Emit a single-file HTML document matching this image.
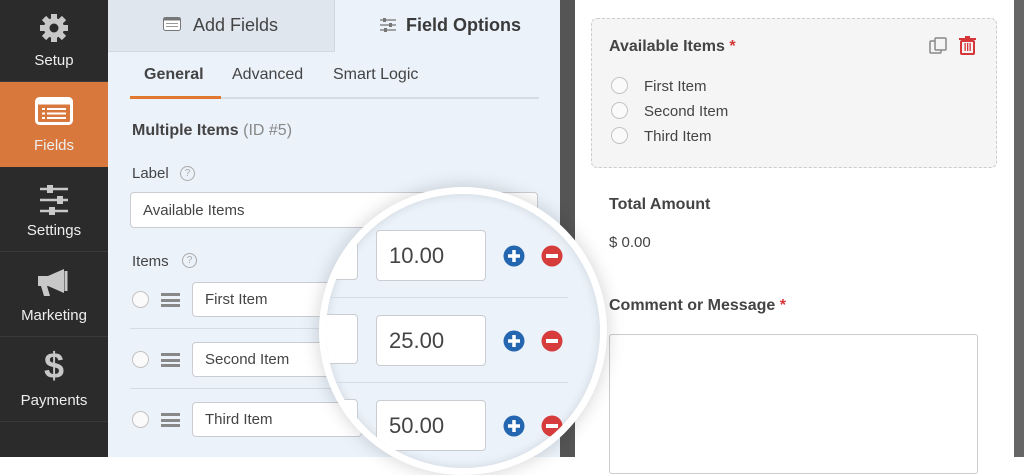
<!DOCTYPE html>
<html><head><style>
*{box-sizing:border-box;margin:0;padding:0}
body{width:1024px;height:457px;overflow:hidden;position:relative;font-family:"Liberation Sans",sans-serif;background:#fff;color:#444}
.abs{position:absolute}
#side{left:0;top:0;width:108px;height:457px;background:#2b2b2b}
.si{position:absolute;left:0;width:108px;height:85px;border-bottom:1px solid #3a3a3a;color:#eee;font-size:15px;text-align:center}
.si span{position:absolute;left:0;right:0;top:52px}
#panel{left:108px;top:0;width:454px;height:457px;background:#ebf2fa}
.inp{position:absolute;background:#fff;border:1px solid #c9ccd1;border-radius:4px;font-size:15px;color:#444;padding-left:12px;display:flex;align-items:center}
.radio{position:absolute;width:17px;height:17px;border-radius:50%;border:1px solid #c3c3c3;background:#fafafa}
.ham{position:absolute;width:19px;height:14px;border-top:3px solid #888;border-bottom:3px solid #888}
.ham:after{content:"";position:absolute;left:0;right:0;top:2.5px;height:3px;background:#888}
.hr{position:absolute;height:1px;background:#d6dce3}
</style></head><body>
<div id="side" class="abs">
 <div class="si" style="top:0;height:82px">
  <svg class="abs" style="left:38px;top:12px" width="32" height="32" viewBox="0 0 32 32"><g fill="#c8c8c8"><circle cx="16" cy="16" r="10"/><g stroke="#c8c8c8" stroke-width="6"><line x1="16" y1="2" x2="16" y2="30"/><line x1="2" y1="16" x2="30" y2="16"/><line x1="6" y1="6" x2="26" y2="26"/><line x1="26" y1="6" x2="6" y2="26"/></g></g><circle cx="16" cy="16" r="4.5" fill="#2b2b2b"/></svg>
  <span style="top:52px">Setup</span></div>
 <div class="si" style="top:82px;height:85px;background:#d9783c;border:none">
  <svg class="abs" style="left:35px;top:15px" width="38" height="28" viewBox="0 0 38 28"><rect x="1.5" y="1.5" width="35" height="25" rx="3" fill="none" stroke="#fff" stroke-width="3"/><rect x="1.5" y="1.5" width="35" height="6" fill="#fff"/><g fill="#fff"><rect x="7" y="11" width="3" height="2"/><rect x="12" y="11" width="19" height="2"/><rect x="7" y="15.5" width="3" height="2"/><rect x="12" y="15.5" width="19" height="2"/><rect x="7" y="20" width="3" height="2"/><rect x="12" y="20" width="19" height="2"/></g></svg>
  <span style="top:55px">Fields</span></div>
 <div class="si" style="top:167px">
  <svg class="abs" style="left:38px;top:18px" width="32" height="30" viewBox="0 0 32 30"><g stroke="#c8c8c8" stroke-width="2.5"><line x1="2" y1="4" x2="30" y2="4"/><line x1="2" y1="15" x2="30" y2="15"/><line x1="2" y1="26" x2="30" y2="26"/></g><g fill="#c8c8c8"><rect x="9" y="0" width="6" height="8"/><rect x="19" y="11" width="6" height="8"/><rect x="11" y="22" width="6" height="8"/></g></svg>
  <span style="top:55px">Settings</span></div>
 <div class="si" style="top:252px">
  <svg class="abs" style="left:36px;top:16px" width="36" height="30" viewBox="0 0 36 30"><path d="M2 8h10l16-7v24L12 18H11l3 10H8L5 18H2z" fill="#c8c8c8"/><path d="M30 3v20" stroke="#c8c8c8" stroke-width="3"/></svg>
  <span style="top:55px">Marketing</span></div>
 <div class="si" style="top:337px">
  <div class="abs" style="left:0;right:0;top:8px;font-size:36px;color:#c8c8c8;font-weight:bold">$</div>
  <span style="top:55px">Payments</span></div>
</div>
<div id="panel" class="abs">
 <div class="abs" style="left:0;top:0;width:227px;height:52px;background:#dfe6ee;border-right:1px solid #d0d8e0;border-bottom:1px solid #d0d8e0"></div>
 <svg class="abs" style="left:55px;top:17px" width="18" height="14"><rect x="0.5" y="0.5" width="17" height="13" rx="2" fill="#fff" stroke="#777"/><rect x="0.5" y="0.5" width="17" height="3" fill="#777"/><g fill="#999"><rect x="3" y="6" width="12" height="1"/><rect x="3" y="9" width="12" height="1"/></g></svg>
 <div class="abs" style="left:85px;top:15px;font-size:18px;color:#444">Add Fields</div>
 <svg class="abs" style="left:272px;top:17px" width="16" height="16" viewBox="0 0 16 16"><g stroke="#777" stroke-width="1.3"><line x1="0" y1="3" x2="16" y2="3"/><line x1="0" y1="8" x2="16" y2="8"/><line x1="0" y1="13" x2="16" y2="13"/></g><g fill="#777"><rect x="3" y="1" width="3" height="4"/><rect x="9" y="6" width="3" height="4"/><rect x="4" y="11" width="3" height="4"/></g></svg>
 <div class="abs" style="left:298px;top:15px;font-size:18px;font-weight:bold;color:#3a3a3a">Field Options</div>
 <div class="abs" style="left:36px;top:66px;font-size:16px;font-weight:bold;color:#444">General</div>
 <div class="abs" style="left:124px;top:66px;font-size:16px;color:#444">Advanced</div>
 <div class="abs" style="left:225px;top:66px;font-size:16px;color:#444">Smart Logic</div>
 <div class="hr" style="left:22px;top:97px;width:409px;height:2px"></div>
 <div class="abs" style="left:22px;top:96px;width:91px;height:3px;background:#e27730"></div>
 <div class="abs" style="left:24px;top:122px;font-size:16px;font-weight:bold;color:#444">Multiple Items <span style="font-weight:normal;color:#888">(ID #5)</span></div>
 <div class="abs" style="left:24px;top:165px;font-size:15px;color:#444">Label</div>
 <div class="abs" style="left:72px;top:166px;width:15px;height:15px;border:1px solid #aaa;border-radius:50%;font-size:10px;color:#aaa;text-align:center;line-height:13px">?</div>
 <div class="inp" style="left:22px;top:192px;width:408px;height:36px">Available Items</div>
 <div class="abs" style="left:24px;top:253px;font-size:15px;color:#444">Items</div>
 <div class="abs" style="left:74px;top:253px;width:15px;height:15px;border:1px solid #aaa;border-radius:50%;font-size:10px;color:#aaa;text-align:center;line-height:13px">?</div>
 <div class="radio" style="left:24px;top:291px"></div><div class="ham" style="left:53px;top:293px"></div>
 <div class="inp" style="left:84px;top:282px;width:170px;height:35px">First Item</div>
 <div class="hr" style="left:22px;top:328px;width:300px"></div>
 <div class="radio" style="left:24px;top:351px"></div><div class="ham" style="left:53px;top:353px"></div>
 <div class="inp" style="left:84px;top:342px;width:170px;height:35px">Second Item</div>
 <div class="hr" style="left:22px;top:388px;width:300px"></div>
 <div class="radio" style="left:24px;top:411px"></div><div class="ham" style="left:53px;top:413px"></div>
 <div class="inp" style="left:84px;top:402px;width:170px;height:35px">Third Item</div>
</div>
<div class="abs" style="left:560px;top:0;width:15px;height:457px;background:#555"></div>
<div class="abs" style="left:1014px;top:0;width:10px;height:457px;background:#666"></div>
<div class="abs" style="left:591px;top:18px;width:406px;height:150px;background:#f5f5f5;border:1px dashed #ccc;border-radius:6px"></div>
<div class="abs" style="left:609px;top:38px;font-size:16px;font-weight:bold;color:#444">Available Items <span style="color:#d63638">*</span></div>
<svg class="abs" style="left:929px;top:37px" width="20" height="18"><rect x="1" y="4" width="11" height="12" rx="1" fill="none" stroke="#888" stroke-width="1.5"/><rect x="6" y="1" width="11" height="12" rx="1" fill="#f5f5f5" stroke="#888" stroke-width="1.5"/></svg>
<svg class="abs" style="left:959px;top:36px" width="17" height="19"><rect x="0" y="2" width="17" height="2" fill="#d63638"/><rect x="6" y="0" width="5" height="2" fill="#d63638"/><rect x="2" y="5" width="13" height="13" rx="1" fill="none" stroke="#d63638" stroke-width="2"/><g fill="#d63638"><rect x="5.5" y="7" width="1.3" height="8"/><rect x="8" y="7" width="1.3" height="8"/><rect x="10.5" y="7" width="1.3" height="8"/></g></svg>
<div class="radio" style="left:611px;top:77px"></div><div class="abs" style="left:644px;top:78px;font-size:15px">First Item</div>
<div class="radio" style="left:611px;top:102px"></div><div class="abs" style="left:644px;top:103px;font-size:15px">Second Item</div>
<div class="radio" style="left:611px;top:127px"></div><div class="abs" style="left:644px;top:128px;font-size:15px">Third Item</div>
<div class="abs" style="left:609px;top:196px;font-size:16px;font-weight:bold;color:#444">Total Amount</div>
<div class="abs" style="left:609px;top:234px;font-size:15px">$ 0.00</div>
<div class="abs" style="left:609px;top:297px;font-size:16px;font-weight:bold;color:#444">Comment or Message <span style="color:#d63638">*</span></div>
<div class="abs" style="left:609px;top:334px;width:369px;height:140px;border:1px solid #ccc;border-radius:3px"></div>
<!-- magnifier -->
<div class="abs" style="left:319px;top:187px;width:288px;height:288px;border-radius:50%;background:#fff;box-shadow:0 0 18px rgba(0,0,0,.18)"></div>
<div class="abs" style="left:326px;top:194px;width:274px;height:274px;border-radius:50%;background:#ebf2fa;overflow:hidden;box-shadow:inset 0 0 10px rgba(0,0,0,.12)">
 <div class="abs" style="left:-326px;top:-194px;width:1024px;height:457px">
  <div class="inp" style="left:200px;top:230px;width:158px;height:50px"></div>
  <div class="inp" style="left:376px;top:230px;width:110px;height:51px;font-size:22px">10.00</div>
  <div class="hr" style="left:200px;top:297px;width:368px"></div>
  <div class="inp" style="left:200px;top:314px;width:158px;height:50px"></div>
  <div class="inp" style="left:376px;top:315px;width:110px;height:51px;font-size:22px">25.00</div>
  <div class="hr" style="left:200px;top:382px;width:368px"></div>
  <div class="inp" style="left:200px;top:399px;width:158px;height:50px"></div>
  <div class="inp" style="left:376px;top:400px;width:110px;height:51px;font-size:22px">50.00</div>
  <svg class="abs" style="left:503px;top:245px" width="60" height="200">
   <g><circle cx="11" cy="11" r="10.5" fill="#2566b0"/><path d="M11 5v12M5 11h12" stroke="#fff" stroke-width="3.5"/><circle cx="49" cy="11" r="10.5" fill="#d63c3c"/><path d="M43 11h12" stroke="#fff" stroke-width="4"/></g>
   <g transform="translate(0,85)"><circle cx="11" cy="11" r="10.5" fill="#2566b0"/><path d="M11 5v12M5 11h12" stroke="#fff" stroke-width="3.5"/><circle cx="49" cy="11" r="10.5" fill="#d63c3c"/><path d="M43 11h12" stroke="#fff" stroke-width="4"/></g>
   <g transform="translate(0,170)"><circle cx="11" cy="11" r="10.5" fill="#2566b0"/><path d="M11 5v12M5 11h12" stroke="#fff" stroke-width="3.5"/><circle cx="49" cy="11" r="10.5" fill="#d63c3c"/><path d="M43 11h12" stroke="#fff" stroke-width="4"/></g>
  </svg>
 </div>
</div>
</body></html>
